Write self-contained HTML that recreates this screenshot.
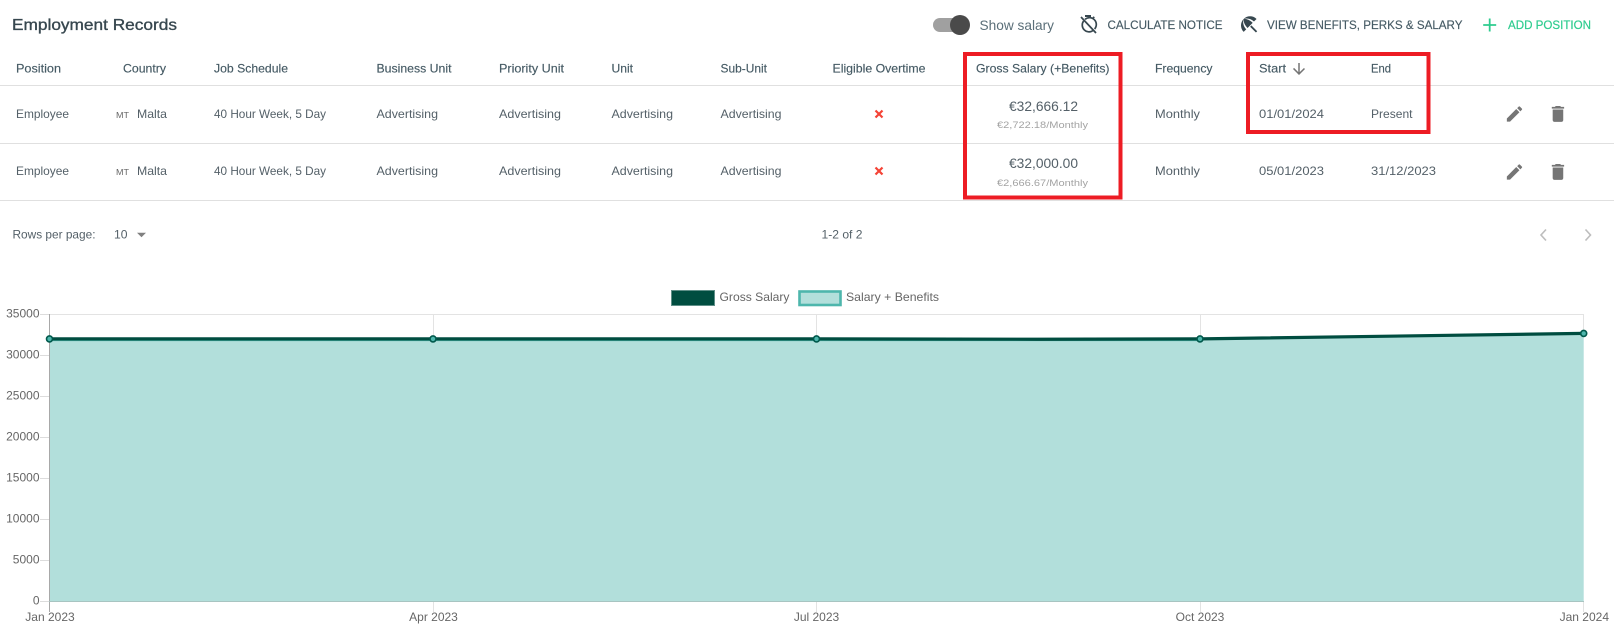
<!DOCTYPE html>
<html lang="en">
<head>
<meta charset="utf-8">
<title>Employment Records</title>
<style>
html,body{margin:0;padding:0;background:#fff;width:1614px;height:631px;overflow:hidden}
svg{display:block}
text{font-family:"Liberation Sans",sans-serif;white-space:pre}
.h{font-size:12px;fill:#455a64;stroke:#455a64;stroke-width:.15}
.c{font-size:12px;fill:#546068}
.a{font-size:12px;fill:#666}
.b{font-size:12px;fill:#455a64;stroke:#455a64;stroke-width:.15}
.s{font-size:9.5px;fill:#a3a3a3}
</style>
</head>
<body>
<svg width="1614" height="631" viewBox="0 0 1614 631" xmlns="http://www.w3.org/2000/svg">
<rect width="1614" height="631" fill="#fff"/>

<!-- Toolbar -->
<text x="12" y="30" font-size="16" fill="#37474f" stroke="#37474f" stroke-width=".35" textLength="165" lengthAdjust="spacingAndGlyphs">Employment Records</text>
<rect x="933" y="18" width="36" height="14" rx="7" fill="#a0a0a0"/>
<circle cx="960" cy="25" r="10" fill="#4a4a4a"/>
<text x="979.5" y="30" font-size="14" fill="#5b6f79" textLength="74.5" lengthAdjust="spacingAndGlyphs">Show salary</text>

<g fill="none" stroke="#37474f" stroke-width="1.7">
<path d="M1085 16h6" stroke-width="2"/>
<path d="M1083.6 21A6.8 6.8 0 0 0 1093 30.6M1085 19.4a6.8 6.8 0 0 1 9.6 9.6"/>
<path d="M1081 17l15 16"/>
<path d="M1092.5 18.5l1.8 -1.6"/>
</g>
<text class="b" x="1107.5" y="29" textLength="115" lengthAdjust="spacingAndGlyphs">CALCULATE NOTICE</text>

<path transform="translate(1238.3 13.6) scale(.9)" fill="#37474f" d="M13.127 14.56l1.43-1.43 6.44 6.443L19.57 21zm4.293-5.73l2.86-2.86c-3.95-3.95-10.35-3.96-14.3-.02 3.93-1.3 8.31-.25 11.44 2.88zM5.95 5.98c-3.94 3.95-3.93 10.35.02 14.3l2.86-2.86C5.7 14.29 4.65 9.91 5.95 5.98zm.02-.02l-.01.01c-.38 3.01 1.17 6.88 4.3 10.02l5.73-5.73c-3.13-3.13-7.01-4.68-10.02-4.3z"/>
<text class="b" x="1267" y="29" textLength="195.5" lengthAdjust="spacingAndGlyphs">VIEW BENEFITS, PERKS &amp; SALARY</text>

<path d="M1489.7 18.5v13M1483.2 25h13" stroke="#2ecc8f" stroke-width="1.8" fill="none"/>
<text x="1508" y="29" font-size="12" fill="#2ecc8f" stroke="#2ecc8f" stroke-width=".2" textLength="83" lengthAdjust="spacingAndGlyphs">ADD POSITION</text>

<!-- Table header -->
<text class="h" x="16" y="72.5" textLength="45" lengthAdjust="spacingAndGlyphs">Position</text>
<text class="h" x="123" y="72.5" textLength="43" lengthAdjust="spacingAndGlyphs">Country</text>
<text class="h" x="214" y="72.5" textLength="74" lengthAdjust="spacingAndGlyphs">Job Schedule</text>
<text class="h" x="376.5" y="72.5" textLength="75" lengthAdjust="spacingAndGlyphs">Business Unit</text>
<text class="h" x="499" y="72.5" textLength="65" lengthAdjust="spacingAndGlyphs">Priority Unit</text>
<text class="h" x="611.5" y="72.5" textLength="21.5" lengthAdjust="spacingAndGlyphs">Unit</text>
<text class="h" x="720.5" y="72.5" textLength="46.5" lengthAdjust="spacingAndGlyphs">Sub-Unit</text>
<text class="h" x="832.5" y="72.5" textLength="93" lengthAdjust="spacingAndGlyphs">Eligible Overtime</text>
<text class="h" x="976" y="72.5" textLength="133.5" lengthAdjust="spacingAndGlyphs">Gross Salary (+Benefits)</text>
<text class="h" x="1155" y="72.5" textLength="57.5" lengthAdjust="spacingAndGlyphs">Frequency</text>
<text class="h" x="1259" y="72.5" textLength="27" lengthAdjust="spacingAndGlyphs">Start</text>
<path transform="translate(1290 60) scale(.75)" fill="#757575" d="M20 12l-1.41-1.41L13 16.17V4h-2v12.17l-5.58-5.59L4 12l8 8 8-8z"/>
<text class="h" x="1371" y="72.5" font-size="12" textLength="20" lengthAdjust="spacingAndGlyphs">End</text>

<rect x="0" y="85" width="1614" height="1" fill="#e0e0e0"/>
<rect x="0" y="143" width="1614" height="1" fill="#e0e0e0"/>
<rect x="0" y="200" width="1614" height="1" fill="#e0e0e0"/>

<!-- Row 1 -->
<text class="c" x="16" y="118" textLength="53" lengthAdjust="spacingAndGlyphs">Employee</text>
<text x="116" y="118" font-size="8.5" fill="#666" textLength="13" lengthAdjust="spacingAndGlyphs">MT</text>
<text class="c" x="137" y="118" textLength="30" lengthAdjust="spacingAndGlyphs">Malta</text>
<text class="c" x="214" y="118" textLength="112" lengthAdjust="spacingAndGlyphs">40 Hour Week, 5 Day</text>
<text class="c" x="376.5" y="118" textLength="61.5" lengthAdjust="spacingAndGlyphs">Advertising</text>
<text class="c" x="499" y="118" textLength="62" lengthAdjust="spacingAndGlyphs">Advertising</text>
<text class="c" x="611.5" y="118" textLength="61.5" lengthAdjust="spacingAndGlyphs">Advertising</text>
<text class="c" x="720.5" y="118" textLength="61" lengthAdjust="spacingAndGlyphs">Advertising</text>
<path d="M875.5 110.5l7 7M882.5 110.5l-7 7" stroke="#f44336" stroke-width="2.2" fill="none"/>
<text x="1009" y="111" font-size="14" fill="#546068" textLength="69" lengthAdjust="spacingAndGlyphs">€32,666.12</text>
<text class="s" x="997" y="128" textLength="91" lengthAdjust="spacingAndGlyphs">€2,722.18/Monthly</text>
<text class="c" x="1155" y="118" textLength="45" lengthAdjust="spacingAndGlyphs">Monthly</text>
<text class="c" x="1259" y="118" textLength="65" lengthAdjust="spacingAndGlyphs">01/01/2024</text>
<text class="c" x="1371" y="118" textLength="41.5" lengthAdjust="spacingAndGlyphs">Present</text>
<path transform="translate(1504.3 103.8) scale(.85)" fill="#757575" d="M3 17.25V21h3.75L17.81 9.94l-3.75-3.75L3 17.25zM20.71 7.04c.39-.39.39-1.02 0-1.41l-2.34-2.34c-.39-.39-1.02-.39-1.41 0l-1.83 1.83 3.75 3.75 1.83-1.83z"/>
<path transform="translate(1547.4 103.4) scale(.88)" fill="#757575" d="M6 19c0 1.1.9 2 2 2h8c1.1 0 2-.9 2-2V7H6v12zM19 4h-3.5l-1-1h-5l-1 1H5v2h14V4z"/>

<!-- Row 2 -->
<text class="c" x="16" y="175" textLength="53" lengthAdjust="spacingAndGlyphs">Employee</text>
<text x="116" y="175" font-size="8.5" fill="#666" textLength="13" lengthAdjust="spacingAndGlyphs">MT</text>
<text class="c" x="137" y="175" textLength="30" lengthAdjust="spacingAndGlyphs">Malta</text>
<text class="c" x="214" y="175" textLength="112" lengthAdjust="spacingAndGlyphs">40 Hour Week, 5 Day</text>
<text class="c" x="376.5" y="175" textLength="61.5" lengthAdjust="spacingAndGlyphs">Advertising</text>
<text class="c" x="499" y="175" textLength="62" lengthAdjust="spacingAndGlyphs">Advertising</text>
<text class="c" x="611.5" y="175" textLength="61.5" lengthAdjust="spacingAndGlyphs">Advertising</text>
<text class="c" x="720.5" y="175" textLength="61" lengthAdjust="spacingAndGlyphs">Advertising</text>
<path d="M875.5 167.5l7 7M882.5 167.5l-7 7" stroke="#f44336" stroke-width="2.2" fill="none"/>
<text x="1009" y="168" font-size="14" fill="#546068" textLength="69" lengthAdjust="spacingAndGlyphs">€32,000.00</text>
<text class="s" x="997" y="186" textLength="91" lengthAdjust="spacingAndGlyphs">€2,666.67/Monthly</text>
<text class="c" x="1155" y="175" textLength="45" lengthAdjust="spacingAndGlyphs">Monthly</text>
<text class="c" x="1259" y="175" textLength="65" lengthAdjust="spacingAndGlyphs">05/01/2023</text>
<text class="c" x="1371" y="175" textLength="65" lengthAdjust="spacingAndGlyphs">31/12/2023</text>
<path transform="translate(1504.3 161.8) scale(.85)" fill="#757575" d="M3 17.25V21h3.75L17.81 9.94l-3.75-3.75L3 17.25zM20.71 7.04c.39-.39.39-1.02 0-1.41l-2.34-2.34c-.39-.39-1.02-.39-1.41 0l-1.83 1.83 3.75 3.75 1.83-1.83z"/>
<path transform="translate(1547.4 161.4) scale(.88)" fill="#757575" d="M6 19c0 1.1.9 2 2 2h8c1.1 0 2-.9 2-2V7H6v12zM19 4h-3.5l-1-1h-5l-1 1H5v2h14V4z"/>

<!-- Highlight boxes -->
<rect x="965" y="54" width="155.5" height="143.5" fill="none" stroke="#ed1c24" stroke-width="4"/>
<rect x="1248" y="54" width="180.5" height="78" fill="none" stroke="#ed1c24" stroke-width="4"/>

<!-- Pagination -->
<text class="c" x="12.5" y="238.5" textLength="83" lengthAdjust="spacingAndGlyphs">Rows per page:</text>
<text class="c" x="114" y="238.5" textLength="13.5" lengthAdjust="spacingAndGlyphs">10</text>
<path d="M137 232.8h9l-4.5 4.4z" fill="#808080"/>
<text class="c" x="821.5" y="238.5" textLength="41" lengthAdjust="spacingAndGlyphs">1-2 of 2</text>
<path d="M1546 229.5l-5 5.5 5 5.5M1585.5 229.5l5 5.5-5 5.5" fill="none" stroke="#bdbdbd" stroke-width="1.6"/>

<!-- Legend -->
<rect x="671.5" y="290.5" width="43" height="15" fill="#004d40" stroke="#5f8f88" stroke-width="1"/>
<text x="719.5" y="301" font-size="12" fill="#666" textLength="70" lengthAdjust="spacingAndGlyphs">Gross Salary</text>
<rect x="799.5" y="291.5" width="41" height="13.5" fill="#b2dfdb" stroke="#4db6ac" stroke-width="2.6"/>
<text x="846" y="301" font-size="12" fill="#666" textLength="93" lengthAdjust="spacingAndGlyphs">Salary + Benefits</text>

<!-- Chart grid -->
<path d="M49.5 314.5H1584M433.5 314v26M816.5 314v26M1200.5 314v26M1583.5 314v20" stroke="#e3e3e3" stroke-width="1" fill="none"/>
<path d="M40 314.5h9M40 355.5h9M40 396.5h9M40 437.5h9M40 478.5h9M40 519.5h9M40 560.5h9M40 601.5h9" stroke="#dcdcdc" stroke-width="1"/>
<path d="M433.5 602v10M816.5 602v10M1200.5 602v10M1583.5 602v10" stroke="#e3e3e3" stroke-width="1"/>

<!-- Area -->
<path d="M49.3 338.9L433 338.9 816.5 338.9C950 339.5 1070 339.2 1200 338.9C1330 337 1460 334.5 1583.7 333.4V601.5H49.3Z" fill="#b2dfdb"/>
<path d="M49.5 314v298" stroke="#a8a8a8" stroke-width="1"/>
<path d="M49 601.5H1584" stroke="#a8c4c1" stroke-width="1"/>
<path d="M49.3 340.6H1200" stroke="#4db6ac" stroke-width="1"/>
<path d="M49.3 338.9L433 338.9 816.5 338.9C950 339.5 1070 339.2 1200 338.9C1330 337 1460 334.5 1583.7 333.4" fill="none" stroke="#004d40" stroke-width="3.2"/>
<g fill="#4db6ac" stroke="#00594c" stroke-width="1.6">
<circle cx="49.5" cy="338.9" r="3"/>
<circle cx="433" cy="338.9" r="3"/>
<circle cx="816.5" cy="338.9" r="3"/>
<circle cx="1200" cy="338.9" r="3"/>
<circle cx="1583.7" cy="333.4" r="3"/>
</g>

<!-- Y axis -->
<g text-anchor="end">
<text class="a" x="39.5" y="317.5">35000</text>
<text class="a" x="39.5" y="358.5">30000</text>
<text class="a" x="39.5" y="399.5">25000</text>
<text class="a" x="39.5" y="440.5">20000</text>
<text class="a" x="39.5" y="481.5">15000</text>
<text class="a" x="39.5" y="522.5">10000</text>
<text class="a" x="39.5" y="563.5">5000</text>
<text class="a" x="39.5" y="604.5">0</text>
</g>

<!-- X axis -->
<g text-anchor="middle">
<text class="a" x="50" y="621">Jan 2023</text>
<text class="a" x="433.5" y="621">Apr 2023</text>
<text class="a" x="816.5" y="621">Jul 2023</text>
<text class="a" x="1200" y="621">Oct 2023</text>
</g>
<text class="a" x="1609" y="621" text-anchor="end">Jan 2024</text>
</svg>
</body>
</html>
